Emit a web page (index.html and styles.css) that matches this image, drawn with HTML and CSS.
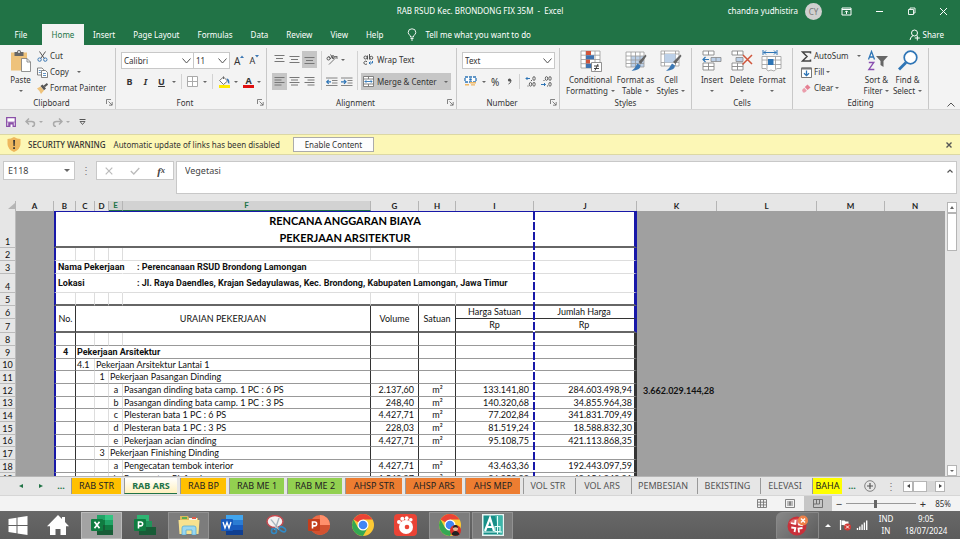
FILE: index.html
```html
<!DOCTYPE html>
<html lang="id">
<head>
<meta charset="utf-8">
<title>RAB RSUD Kec. BRONDONG FIX 35M - Excel</title>
<link rel="stylesheet" href="styles.css">
</head>
<body>
<header class="top">
  <div class="titlebar">
    <span></span>
    <h1>RAB RSUD Kec. BRONDONG FIX 35M&nbsp; -&nbsp; Excel</h1>
    <div class="account">
      <span>chandra yudhistira</span><span class="avatar">CY</span>
      <button aria-label="Ribbon display options"><svg width="11" height="9" viewBox="0 0 11 9"><path d="M1 1h9v7H1zM1 2.500h9M5.500 7V4M4 5.300l1.500-1.500L7 5.300" fill="none" stroke="#fff"/></svg></button>
      <button aria-label="Minimize"><svg width="9" height="9" viewBox="0 0 9 9"><path d="M1 4.500h7" stroke="#fff"/></svg></button>
      <button aria-label="Restore"><svg width="9" height="9" viewBox="0 0 9 9"><path d="M1.500 2.500h5v5h-5zM3 2.500V1h5v5H6.500" fill="none" stroke="#fff" stroke-width=".9"/></svg></button>
      <button aria-label="Close"><svg width="9" height="9" viewBox="0 0 9 9"><path d="M1 1l7 7M8 1L1 8" stroke="#fff"/></svg></button>
    </div>
  </div>
  <nav class="tabs">
    <button class="file">File</button><button class="active">Home</button><button>Insert</button><button>Page Layout</button><button>Formulas</button><button>Data</button><button>Review</button><button>View</button><button>Help</button>
    <button class="tell"><svg width="10" height="13" viewBox="0 0 10 13"><path d="M3.500 9V7.800Q1.200 6.500 1.200 4.400A3.800 3.600 0 0 1 8.800 4.400Q8.800 6.500 6.500 7.800V9zM3.500 10.500h3M4 12h2" fill="none" stroke="#fff" stroke-width=".9"/></svg>Tell me what you want to do</button>
    <button class="share"><svg width="11" height="12" viewBox="0 0 11 12"><circle cx="5.500" cy="4" r="3" fill="none" stroke="#fff"/><path d="M1 11q.5-3.500 3-4.300M8.300 6.500v5M5.800 9h5" fill="none" stroke="#fff"/></svg>Share</button>
  </nav>
</header>

<section class="ribbon" aria-label="Home ribbon">
  <div class="group clipboard">
    <div class="body">
      <button class="big"><svg width="22" height="22" viewBox="0 0 22 22"><rect x="1" y="2.500" width="16" height="18" fill="#eec27b"/><path d="M4.500 2h2.500a2 2 0 0 1 4 0h2.500v4h-9z" fill="#666"/><circle cx="9" cy="2" r=".9" fill="#fff"/><path d="M11.500 8.500h5.500l3.500 3.500v9.500h-9z" fill="#fff" stroke="#777" stroke-width=".8"/><path d="M17 8.500v3.500h3.500" fill="none" stroke="#777" stroke-width=".8"/></svg><span>Paste</span><i class="dn"></i></button>
      <div class="list">
        <button><svg width="11" height="11" viewBox="0 0 11 11"><path d="M2.500.5l4.800 7M8.500.5L3.700 7.500" stroke="#555" fill="none"/><circle cx="2.600" cy="8.600" r="1.700" fill="none" stroke="#3c78b4"/><circle cx="8.300" cy="8.600" r="1.700" fill="none" stroke="#3c78b4"/></svg>Cut</button>
        <button><svg width="11" height="11" viewBox="0 0 11 11"><path d="M.5 1h4.500l1.500 1.500V8h-6z" fill="#fff" stroke="#666" stroke-width=".8"/><path d="M4.500 3.500H8.500l2 2v5h-6z" fill="#fff" stroke="#666" stroke-width=".8"/><path d="M1.800 3.500h2M1.800 5.500h2M6 6.500h3M6 8.500h3" stroke="#3c78b4" stroke-width=".8"/></svg>Copy<i class="dn gap"></i></button>
        <button><svg width="11" height="11" viewBox="0 0 11 11"><path d="M0 5.500l3.500-2 3.500 4-3 3.500q-1-3-4-5.500z" fill="#eec27b"/><path d="M3.500 3l2-1.500 3.500 4-2 1.800z" fill="#555"/><path d="M7.200 3.600L10.500.8" stroke="#555" stroke-width="2"/></svg>Format Painter</button>
      </div>
    </div>
    <div class="label"><span>Clipboard</span><svg class="launch" viewBox="0 0 7 7"><path d="M.5 5V.5H5M2.500 2.500l3.500 3.500M6.200 3v3.200H3" fill="none" stroke="#666" stroke-width=".8"/></svg></div>
  </div>

  <div class="group font">
    <div class="body rows">
      <div class="row">
        <span class="combo name"><select aria-label="Font"><option>Calibri</option></select><svg width="9" height="6" viewBox="0 0 9 6"><path d="M.5.500l4 4.500 4-4.500" fill="none" stroke="#555"/></svg></span><span class="combo size"><select aria-label="Font size"><option>11</option></select><svg width="9" height="6" viewBox="0 0 9 6"><path d="M.5.500l4 4.500 4-4.500" fill="none" stroke="#555"/></svg></span>
        <button class="grow" aria-label="Increase font size">A<svg width="4" height="3" viewBox="0 0 4 3"><path d="M0 3l2-2.500L4 3z" fill="#3c78b4"/></svg></button>
        <button class="grow less" aria-label="Decrease font size">A<svg width="4" height="3" viewBox="0 0 4 3"><path d="M0 0l2 2.500L4 0z" fill="#3c78b4"/></svg></button>
      </div>
      <div class="row tools">
        <button class="b">B</button><button class="it">I</button><button class="u">U</button><i class="dn"></i><i class="rule"></i>
        <button aria-label="Borders"><svg width="11" height="11" viewBox="0 0 11 11"><path d="M.5.500h10v10H.500zM5.500.500v10M.5 5.500h10" fill="#fff" stroke="#aaa"/></svg></button><i class="dn"></i><i class="rule"></i>
        <button aria-label="Fill color"><svg width="13" height="12" viewBox="0 0 13 12"><path d="M1.500 4.500L5.500 1l4 4-4 3.500z" fill="#fff" stroke="#666" stroke-width=".9"/><path d="M5.500 3V.500" stroke="#666"/><path d="M8.500 2.500q3.500 0 2.800 5.500-1.600-.4-1.800-3z" fill="#3c78b4"/><path d="M1 9h11v3H1z" fill="#ffeb00"/></svg></button><i class="dn"></i>
        <button aria-label="Font color" class="fc">A</button><i class="dn"></i>
      </div>
    </div>
    <div class="label"><span>Font</span><svg class="launch" viewBox="0 0 7 7"><path d="M.5 5V.5H5M2.500 2.500l3.500 3.500M6.200 3v3.200H3" fill="none" stroke="#666" stroke-width=".8"/></svg></div>
  </div>

  <div class="group align">
    <div class="body cols">
      <div class="aligns">
        <button aria-label="Top align"><svg width="11" height="9" viewBox="0 0 11 9"><path d="M.5.500h10M2 3.500h7M.5 6.500h10" stroke="#777"/></svg></button>
        <button aria-label="Middle align"><svg width="11" height="9" viewBox="0 0 11 9"><path d="M.5 1.500h10M2 4.500h7M.5 7.500h10" stroke="#777"/></svg></button>
        <button class="on" aria-label="Bottom align"><svg width="11" height="9" viewBox="0 0 11 9"><path d="M.5 2.500h10M2 5.500h7M.5 8.500h10" stroke="#777"/></svg></button>
        <button class="on" aria-label="Align left"><svg width="11" height="9" viewBox="0 0 11 9"><path d="M.5.500h10M.5 3h7M.5 5.500h10M.5 8h7" stroke="#777"/></svg></button>
        <button aria-label="Center"><svg width="11" height="9" viewBox="0 0 11 9"><path d="M.5.500h10M2 3h7M.5 5.500h10M2 8h7" stroke="#777"/></svg></button>
        <button aria-label="Align right"><svg width="11" height="9" viewBox="0 0 11 9"><path d="M.5.500h10M3.500 3h7M.5 5.500h10M3.500 8h7" stroke="#777"/></svg></button>
      </div>
      <div class="indent">
        <div><button aria-label="Orientation"><svg width="12" height="11" viewBox="0 0 12 11"><path d="M3 10.500l8-8M11 5V2.500H8.500" fill="none" stroke="#666" stroke-width=".9"/><circle cx="2.500" cy="4.500" r="1.500" fill="none" stroke="#555"/><path d="M2.500 2l2.500 3M4.500.500l3 4.500" stroke="#555"/><circle cx="7" cy="3" r="1.300" fill="none" stroke="#555"/></svg></button><i class="dn"></i></div>
        <div><button aria-label="Decrease indent"><svg width="12" height="10" viewBox="0 0 12 10"><path d="M0 1h11.500M6 3.500h5.500M6 6h5.500M0 8.500h11.500" stroke="#777" stroke-width=".9"/><path d="M5 4.800H.8M2.700 2.800l-2 2 2 2" fill="none" stroke="#2e75b6" stroke-width="1.200"/></svg></button><button aria-label="Increase indent"><svg width="12" height="10" viewBox="0 0 12 10"><path d="M0 1h11.500M6.500 3.500h5M6.500 6h5M0 8.500h11.500" stroke="#777" stroke-width=".9"/><path d="M0 4.800h5M3 2.800l2 2-2 2" fill="none" stroke="#2e75b6" stroke-width="1.200"/></svg></button></div>
      </div>
      <div class="wrap">
        <button><svg width="11" height="11" viewBox="0 0 11 11"><circle cx="2.500" cy="3.500" r="1.500" fill="none" stroke="#555"/><path d="M4.500 1.500V5.500M6.500 0v5.500M4 7.700a1.800 1.600 0 1 0 0 2.200" fill="none" stroke="#555"/><circle cx="8.300" cy="3.800" r="1.500" fill="none" stroke="#555"/><path d="M9.500 7v2H6M7.500 7.500L6 9l1.500 1.500" fill="none" stroke="#2e75b6"/></svg>Wrap Text</button>
        <button class="on"><svg width="11" height="11" viewBox="0 0 11 11"><path d="M.5.500h10v10H.500zM.5 3h10M.5 8h10M5.500.500V3M5.500 8v2.500" fill="#fff" stroke="#777" stroke-width=".9"/><path d="M1.800 5.500h7.400M3.300 4.200L2 5.500l1.300 1.300M7.700 4.200L9 5.500 7.700 6.800" fill="none" stroke="#2e75b6" stroke-width=".9"/></svg>Merge &amp; Center<i class="dn"></i></button>
      </div>
    </div>
    <div class="label"><span>Alignment</span><svg class="launch" viewBox="0 0 7 7"><path d="M.5 5V.5H5M2.500 2.500l3.500 3.500M6.200 3v3.200H3" fill="none" stroke="#666" stroke-width=".8"/></svg></div>
  </div>

  <div class="group number">
    <div class="body rows">
      <div class="row"><span class="combo format"><select aria-label="Number format"><option>Text</option></select><svg width="9" height="6" viewBox="0 0 9 6"><path d="M.5.500l4 4.500 4-4.500" fill="none" stroke="#555"/></svg></span></div>
      <div class="row tools">
        <button aria-label="Accounting format"><svg width="13" height="11" viewBox="0 0 13 11"><path d="M1 1h11v5H1z" fill="#fff" stroke="#2e75b6" stroke-width="1.300" stroke-dasharray="3 1"/><circle cx="6.500" cy="3.500" r="1.300" fill="#2e75b6"/><path d="M6 6h6v1.500H6zM7 8.200h4v1.200H7zM1 8h4v1.500H1z" fill="#eeb765"/></svg></button><i class="dn"></i>
        <button class="pct">%</button><button class="comma" aria-label="Comma style"><svg width="5" height="9" viewBox="0 0 5 9"><circle cx="2.500" cy="3" r="1.600" fill="#555"/><path d="M4 3q.4 3-2.500 4" fill="none" stroke="#555"/></svg></button><i class="rule"></i>
        <button class="dec" aria-label="Increase decimal"><svg width="11" height="11" viewBox="0 0 11 11"><path d="M5 2.500H1M2.500 1L1 2.500 2.500 4" fill="none" stroke="#2e75b6"/><g fill="none" stroke="#555" stroke-width=".9"><ellipse cx="9" cy="2.500" rx="1.200" ry="1.900"/><ellipse cx="5.500" cy="8.300" rx="1.200" ry="1.900"/><ellipse cx="9" cy="8.300" rx="1.200" ry="1.900"/></g><path d="M6 4h1v1H6zM2.500 9.500h1v1h-1z" fill="#555"/></svg></button>
        <button class="dec" aria-label="Decrease decimal"><svg width="11" height="11" viewBox="0 0 11 11"><path d="M0 8.500h4.500M3 7l1.500 1.500L3 10" fill="none" stroke="#2e75b6"/><g fill="none" stroke="#555" stroke-width=".9"><ellipse cx="5.500" cy="2.500" rx="1.200" ry="1.900"/><ellipse cx="9" cy="2.500" rx="1.200" ry="1.900"/><ellipse cx="9" cy="8.300" rx="1.200" ry="1.900"/></g><path d="M2.500 4h1v1h-1zM6 9.500h1v1H6z" fill="#555"/></svg></button>
      </div>
    </div>
    <div class="label"><span>Number</span><svg class="launch" viewBox="0 0 7 7"><path d="M.5 5V.5H5M2.500 2.500l3.500 3.500M6.200 3v3.200H3" fill="none" stroke="#666" stroke-width=".8"/></svg></div>
  </div>

  <div class="group styles">
    <div class="body bigs">
      <button class="big"><svg width="22" height="22" viewBox="0 0 22 22"><path d="M1 1h19v17H1zM1 5.200h19M1 9.500h19M1 13.700h19M6 1v17M15 1v17" fill="#fff" stroke="#999" stroke-width=".8"/><path d="M6 1h5v4H6zM6 9.500h4v4H6z" fill="#d0553b"/><path d="M6 5.200h8v4H6zM6 13.700h6V18H6z" fill="#3f72af"/><path d="M11.500 12.500h10v9h-10z" fill="#fff" stroke="#777" stroke-width=".8"/><path d="M14 16h5M14 18.500h5M18 14l-3 6.500" stroke="#333" stroke-width=".9"/></svg><span>Conditional<br>Formatting<i class="dn"></i></span></button>
      <button class="big"><svg width="22" height="22" viewBox="0 0 22 22"><path d="M1 2h18v15H1z" fill="#fff"/><path d="M6 6h13v11H6z" fill="#bcd0e8"/><path d="M1 2h18v15H1zM1 6h18M1 10h18M1 13.500h18M6 2v15M10.500 2v15M15 2v15" fill="none" stroke="#999" stroke-width=".8"/><path d="M20.500 4.500l1 1.500-5.500 8-2.500-2z" fill="#666"/><path d="M12.500 13.500l3 2q0 4.500-9 5.500 3.500-2.500 6-7.500z" fill="#3c78b4"/></svg><span>Format as<br>Table<i class="dn"></i></span></button>
      <button class="big narrow"><svg width="22" height="22" viewBox="0 0 22 22"><path d="M1 1h18v15H1zM1 4h18M1 12.500h18M4.500 1v15M15.500 1v15" fill="#fff" stroke="#999" stroke-width=".8"/><path d="M4.500 4h11v8.500h-11z" fill="#bcd0e8"/><path d="M20.500 4.500l1 1.500-6 8-2.500-2z" fill="#666"/><path d="M12 13.500l3 2q0 4.500-9 5.500 3.500-2.500 6-7.500z" fill="#3c78b4"/></svg><span>Cell<br>Styles<i class="dn"></i></span></button>
    </div>
    <div class="label"><span>Styles</span></div>
  </div>

  <div class="group cells">
    <div class="body bigs">
      <button class="big"><svg width="22" height="22" viewBox="0 0 22 22"><path d="M2 1h11v4H2zM7.500 1v4M2 13h11v7H2zM7.500 13v7M2 16.500h11" fill="#fff" stroke="#888" stroke-width=".9"/><path d="M10 7.500h10v4H10zM15 7.500v4" fill="#bcd0e8" stroke="#888" stroke-width=".8"/><path d="M8 9.500H2M4.500 7L2 9.500 4.500 12" fill="none" stroke="#2e75b6" stroke-width="1.200"/></svg><span>Insert</span><i class="dn"></i></button>
      <button class="big"><svg width="22" height="22" viewBox="0 0 22 22"><path d="M1 1h11v4H1zM6.500 1v4M1 13h11v7H1zM6.500 13v7M1 16.500h11" fill="#fff" stroke="#888" stroke-width=".9"/><path d="M5 7.500h7v4H5z" fill="#bcd0e8" stroke="#888" stroke-width=".8"/><path d="M12 5l9 9M21 5l-9.500 9.500" stroke="#d0553b" stroke-width="1.500"/></svg><span>Delete</span><i class="dn"></i></button>
      <button class="big"><svg width="22" height="22" viewBox="0 0 22 22"><path d="M2.500 2.500h13M2 0v5M16 0v5M5 .5l-2 2 2 2M13 .5l2 2-2 2" fill="none" stroke="#2e75b6"/><path d="M1 6.500h19v12h-4l-3 2.500-3-1-3 1-2-2.500H1zM1 10h19M1 14.500h19M6 6.500V19M14.500 6.500V19" fill="#fff" stroke="#999" stroke-width=".8"/><path d="M7 9h5.500v6H7z" fill="#2e75b6"/></svg><span>Format</span><i class="dn"></i></button>
    </div>
    <div class="label"><span>Cells</span></div>
  </div>

  <div class="group editing">
    <div class="body">
      <div class="list">
        <button><svg width="11" height="11" viewBox="0 0 11 11"><path d="M9.500 2.500V1H1.500l4.500 4.500L1.500 10h8V8.500" fill="none" stroke="#444" stroke-width="1.500"/></svg>AutoSum<i class="dn gap"></i></button>
        <button><svg width="11" height="11" viewBox="0 0 11 11"><path d="M.5 1h10v9.500H.500z" fill="#fff" stroke="#777"/><path d="M.5.500h10v2H.500z" fill="#777"/><path d="M5.500 3.500v5M3 6.200l2.500 2.500L8 6.200" fill="none" stroke="#2e75b6" stroke-width="1.300"/></svg>Fill<i class="dn"></i></button>
        <button><svg width="11" height="11" viewBox="0 0 11 11"><path d="M6.500 1.500l3 3-3 2.500-2.700-3z" fill="#e57f92"/><path d="M3.200 4.800l2.700 3L3.800 9.500H2L1 7z" fill="#ea9dab"/></svg>Clear<i class="dn"></i></button>
      </div>
      <button class="big"><svg width="22" height="22" viewBox="0 0 22 22"><path d="M2.500 9.500L5.500 1.500l3 8M3.700 7h3.700" fill="none" stroke="#2e75b6" stroke-width="1.300"/><path d="M2.800 12.500h5l-5 7h5.500" fill="none" stroke="#8a4fb0" stroke-width="1.300"/><path d="M10 6h12l-4.500 5v6l-3-2v-4z" fill="#666"/></svg><span>Sort &amp;<br>Filter<i class="dn"></i></span></button>
      <button class="big"><svg width="22" height="22" viewBox="0 0 22 22"><circle cx="13.500" cy="7.500" r="6.300" fill="#fff" stroke="#2e75b6" stroke-width="1.700"/><path d="M9 12.500L2 19.500" stroke="#2e75b6" stroke-width="2.800"/></svg><span>Find &amp;<br>Select<i class="dn"></i></span></button>
    </div>
    <div class="label"><span>Editing</span></div>
  </div>
  <button class="collapse" aria-label="Collapse ribbon"><svg width="8" height="5" viewBox="0 0 8 5"><path d="M.5 4.500L4 1l3.500 3.500" fill="none" stroke="#555"/></svg></button>
</section>

<div class="quick">
  <button aria-label="Save"><svg width="10" height="10" viewBox="0 0 10 10"><path d="M.7.700h8.600v8.600H.700z" fill="#fff" stroke="#8a4fa8" stroke-width="1.300"/><path d="M0 5h10M2.500 5.500h5V10h-5z" fill="#8a4fa8" stroke="#8a4fa8" stroke-width=".6"/><path d="M4.500 7.500h2V10h-2z" fill="#fff"/></svg></button>
  <button aria-label="Undo"><svg width="11" height="9" viewBox="0 0 11 9"><path d="M4 .5L1 3.500l3 3M1 3.500h5.500q3 0 3 2.500T7 8.500" fill="none" stroke="#aaa" stroke-width="1.500"/></svg><i class="dn pale"></i></button>
  <button aria-label="Redo"><svg width="11" height="9" viewBox="0 0 11 9"><path d="M7 .5l3 3-3 3M10 3.500H4.500q-3 0-3 2.500T4 8.500" fill="none" stroke="#aaa" stroke-width="1.500"/></svg><i class="dn pale"></i></button>
  <button aria-label="Customize"><svg width="7" height="6" viewBox="0 0 7 6"><path d="M.5.500h6" stroke="#555"/><path d="M1 2.500h5l-2.500 3z" fill="none" stroke="#555" stroke-width=".9"/></svg></button>
</div>

<div class="warning" role="alert">
  <svg width="14" height="15" viewBox="0 0 14 15"><path d="M7 0q3 2 6.500 2v5q0 5-6.500 8Q.5 12 .5 7V2Q4 2 7 0z" fill="#eeb75e"/><path d="M6.200 3h1.800l-.3 6H6.500zM6.200 10.200h1.700V12H6.200z" fill="#333"/></svg>
  <b>SECURITY WARNING</b><span>Automatic update of links has been disabled</span><button class="enable">Enable Content</button>
  <button class="dismiss" aria-label="Dismiss"><svg width="6" height="6" viewBox="0 0 6 6"><path d="M.5.500l5 5M5.500.500l-5 5" stroke="#555" stroke-width="1.400"/></svg></button>
</div>

<div class="formula">
  <div class="namebox"><input aria-label="Name box" value="E118"><i class="dn"></i></div>
  <span class="dots">⋮</span>
  <div class="fx">
    <button aria-label="Cancel"><svg width="8" height="8" viewBox="0 0 8 8"><path d="M.7.700l6.600 6.600M7.300.700L.7 7.300" stroke="#bbb" stroke-width="1.200"/></svg></button>
    <button aria-label="Enter"><svg width="10" height="8" viewBox="0 0 10 8"><path d="M.8 4l3 3L9.300 1" fill="none" stroke="#bbb" stroke-width="1.300"/></svg></button>
    <button class="fn" aria-label="Insert function">f<small>x</small></button>
  </div>
  <div class="entry"><textarea aria-label="Formula">Vegetasi</textarea><svg width="6" height="4" viewBox="0 0 6 4"><path d="M.5 3.500L3 1l2.500 2.500" fill="none" stroke="#555" stroke-width="1.200"/></svg></div>
</div>

<main class="work">
  <div class="sheet">
  <table>
    <colgroup><col class="w16"><col class="w38"><col class="w22"><col class="w19"><col class="w14"><col class="w14"><col class="w248"><col class="w48"><col class="w37"><col class="w78"><col class="w103"><col class="w80"><col class="w100"><col class="w68"><col></colgroup>
    <thead><tr><th class="corner"><svg width="7" height="6" viewBox="0 0 7 6"><path d="M7 0v6H0z" fill="#b5b5b5"/></svg></th><th>A</th><th>B</th><th>C</th><th>D</th><th class="sel">E</th><th class="sel">F</th><th>G</th><th>H</th><th>I</th><th>J</th><th>K</th><th>L</th><th>M</th><th>N</th></tr></thead>
    <tbody class="intro">
      <tr class="r1"><th>1</th><td class="out"></td><td class="title first last thick" colspan="9">RENCANA ANGGARAN BIAYA<br>PEKERJAAN ARSITEKTUR<span class="pagebreak"></span></td><td class="out" colspan="4"></td></tr>
      <tr><th>2</th><td class="out"></td><td class="first"></td><td></td><td></td><td></td><td></td><td></td><td></td><td></td><td class="last"></td><td class="out" colspan="4"></td></tr>
      <tr class="info"><th>3</th><td class="out"></td><td class="first open" colspan="4"><span>Nama Pekerjaan</span></td><td class="over"><span>: Perencanaan RSUD Brondong Lamongan</span></td><td></td><td></td><td></td><td class="last"></td><td class="out" colspan="4"></td></tr>
      <tr class="info tall"><th>4</th><td class="out"></td><td class="first open" colspan="4"><span>Lokasi</span></td><td class="over open" colspan="4"><span>: Jl. Raya Daendles, Krajan Sedayulawas, Kec. Brondong, Kabupaten Lamongan, Jawa Timur</span></td><td class="last"></td><td class="out" colspan="4"></td></tr>
      <tr><th>5</th><td class="out"></td><td class="first thick"></td><td class="thick"></td><td class="thick"></td><td class="thick"></td><td class="thick"></td><td class="thick"></td><td class="thick"></td><td class="thick"></td><td class="last thick"></td><td class="out" colspan="4"></td></tr>
    </tbody>
    <tbody class="heads">
      <tr><th>6</th><td class="out"></td><td class="first thick" rowspan="2">No.</td><td class="thick" colspan="4" rowspan="2">URAIAN PEKERJAAN</td><td class="thick" rowspan="2">Volume</td><td class="thick" rowspan="2">Satuan</td><td>Harga Satuan</td><td class="last">Jumlah Harga</td><td class="out" colspan="4"></td></tr>
      <tr class="r7"><th>7</th><td class="out"></td><td class="thick">Rp</td><td class="last thick">Rp</td><td class="out" colspan="4"></td></tr>
    </tbody>
    <tbody class="data">
      <tr><th>8</th><td class="out"></td><td class="first"></td><td></td><td></td><td></td><td></td><td></td><td></td><td></td><td class="last"></td><td class="out" colspan="4"></td></tr>
      <tr class="section"><th>9</th><td class="out"></td><td class="first">4</td><td colspan="4">Pekerjaan Arsitektur</td><td></td><td></td><td></td><td class="last"></td><td class="out" colspan="4"></td></tr>
      <tr><th>10</th><td class="out"></td><td class="first"></td><td>4.1</td><td class="merge" colspan="3">Pekerjaan Arsitektur Lantai 1</td><td></td><td></td><td></td><td class="last"></td><td class="out" colspan="4"></td></tr>
      <tr class="sub"><th>11</th><td class="out"></td><td class="first"></td><td></td><td>1</td><td class="merge" colspan="2">Pekerjaan Pasangan Dinding</td><td></td><td></td><td></td><td class="last"></td><td class="out" colspan="4"></td></tr>
      <tr class="item"><th>12</th><td class="out"></td><td class="first"></td><td></td><td></td><td>a</td><td>Pasangan dinding bata camp. 1 PC : 6 PS</td><td>2.137,60</td><td>m²</td><td>133.141,80</td><td class="last">284.603.498,94</td><td class="out total" colspan="4">3.662.029.144,28</td></tr>
      <tr class="item"><th>13</th><td class="out"></td><td class="first"></td><td></td><td></td><td>b</td><td>Pasangan dinding bata camp. 1 PC : 3 PS</td><td>248,40</td><td>m²</td><td>140.320,68</td><td class="last">34.855.964,38</td><td class="out" colspan="4"></td></tr>
      <tr class="item"><th>14</th><td class="out"></td><td class="first"></td><td></td><td></td><td>c</td><td>Plesteran bata 1 PC : 6 PS</td><td>4.427,71</td><td>m²</td><td>77.202,84</td><td class="last">341.831.709,49</td><td class="out" colspan="4"></td></tr>
      <tr class="item"><th>15</th><td class="out"></td><td class="first"></td><td></td><td></td><td>d</td><td>Plesteran bata 1 PC : 3 PS</td><td>228,03</td><td>m²</td><td>81.519,24</td><td class="last">18.588.832,30</td><td class="out" colspan="4"></td></tr>
      <tr class="item"><th>16</th><td class="out"></td><td class="first"></td><td></td><td></td><td>e</td><td>Pekerjaan acian dinding</td><td>4.427,71</td><td>m²</td><td>95.108,75</td><td class="last">421.113.868,35</td><td class="out" colspan="4"></td></tr>
      <tr class="sub"><th>17</th><td class="out"></td><td class="first"></td><td></td><td>3</td><td class="merge" colspan="2">Pekerjaan Finishing Dinding</td><td></td><td></td><td></td><td class="last"></td><td class="out" colspan="4"></td></tr>
      <tr class="item"><th>18</th><td class="out"></td><td class="first"></td><td></td><td></td><td>a</td><td>Pengecatan tembok interior</td><td>4.427,71</td><td>m²</td><td>43.463,36</td><td class="last">192.443.097,59</td><td class="out" colspan="4"></td></tr>
      <tr class="item"><th>19</th><td class="out"></td><td class="first"></td><td></td><td></td><td>b</td><td>Pengecatan Plafond</td><td>1.549,97</td><td>m²</td><td>36.859,88</td><td class="last">49.156.849,81</td><td class="out" colspan="4"></td></tr>
    </tbody>
  </table>
  </div>
  <div class="vscroll"><button aria-label="Scroll up"><i class="dn up"></i></button><span class="thumb"></span><button aria-label="Scroll down"><i class="dn"></i></button></div>
</main>

<div class="sheets">
  <button class="arrow" aria-label="Previous sheet"><i class="side left"></i></button><button class="arrow" aria-label="Next sheet"><i class="side"></i></button><button class="more">...</button>
  <div class="strip">
    <button class="gold s1">RAB STR</button><button class="current s2">RAB ARS</button><button class="gold s3">RAB BP</button><button class="green s4">RAB ME 1</button><button class="green s4">RAB ME 2</button><button class="orange s5">AHSP STR</button><button class="orange s5">AHSP ARS</button><button class="orange s4">AHS MEP</button><button class="s10">VOL STR</button><button class="s2">VOL ARS</button><button class="s6">PEMBESIAN</button><button class="s7">BEKISTING</button><button class="s8">ELEVASI</button><button class="yellow s9">BAHA</button>
  </div>
  <button class="more">...</button>
  <button class="add" aria-label="New sheet"><svg width="12" height="12" viewBox="0 0 12 12"><circle cx="6" cy="6" r="5.300" fill="none" stroke="#777" stroke-width=".9"/><path d="M3 6h6M6 3v6" stroke="#555" stroke-width="1.200"/></svg></button>
  <span class="dots">⋮</span>
  <div class="hscroll"><button aria-label="Scroll left"><i class="side left"></i></button><span></span><button aria-label="Scroll right"><i class="side"></i></button></div>
</div>

<div class="status">
  <button aria-label="Normal view"><svg width="10" height="9" viewBox="0 0 10 9"><path d="M.5.500h9v8h-9zM.5 3.200h9M.5 5.900h9M3.500.500v8M6.500.500v8" fill="none" stroke="#777" stroke-width=".9"/></svg></button>
  <button aria-label="Page layout view"><svg width="10" height="9" viewBox="0 0 10 9"><path d="M.5.500h9v8h-9zM3 2v5M7 2v5M4.500 2.500h1v4h-1z" fill="none" stroke="#777" stroke-width=".9"/></svg></button>
  <button class="on" aria-label="Page break preview"><svg width="10" height="9" viewBox="0 0 10 9"><path d="M.5.500h9v8h-9zM3.500.500V5H.500M6.500.500V5h-3" fill="none" stroke="#666" stroke-width=".9"/></svg></button>
  <button class="z">−</button><input type="range" aria-label="Zoom" min="10" max="190" value="85"><button class="z">+</button><span class="pc">85%</span>
</div>

<footer class="taskbar">
  <button aria-label="Start"><svg width="20" height="19" viewBox="0 0 20 19"><path d="M.5 3L8.500 1.800V9H.500zM9.500 1.600L19.500 0v9h-10zM.5 10h8v7.200L.5 16zM9.500 10h10v9l-10-1.600z" fill="#fff"/></svg></button>
  <button aria-label="Home"><svg width="22" height="20" viewBox="0 0 22 20"><path d="M11 0l4 4V2h3v5l4 4.200h-3V20h-5.500v-6h-5v6H3v-8.800H0z" fill="#fff"/></svg></button>
  <button class="open focus" aria-label="Excel"><svg width="22" height="20" viewBox="0 0 22 20"><path d="M6 0h8v5H6z" fill="#21a366"/><path d="M14 0h8v5h-8z" fill="#33c481"/><path d="M6 5h8v5H6z" fill="#107c41"/><path d="M14 5h8v5h-8z" fill="#21a366"/><path d="M6 10h16v10H6z" fill="#185c37"/><path d="M14 10h8v5h-8z" fill="#107c41"/><rect y="4" width="12" height="12" rx="1" fill="#107c41"/><path d="M3.500 6.800l5 6.400M8.500 6.800l-5 6.400" stroke="#fff" stroke-width="1.700"/></svg></button>
  <button aria-label="Project"><svg width="22" height="20" viewBox="0 0 22 20"><path d="M3 0h12v6H3z" fill="#2fb573"/><path d="M3 6h15v6H3z" fill="#21935a"/><path d="M5 12h17v8H5z" fill="#185c37"/><rect y="4" width="12" height="12" rx="1" fill="#107c41"/><path d="M4.500 13.500V7h2.200a1.900 1.900 0 0 1 0 3.900H4.500" fill="none" stroke="#fff" stroke-width="1.600"/></svg></button>
  <button class="open" aria-label="Explorer"><svg width="24" height="20" viewBox="0 0 24 20"><path d="M3 1h8l1 2h9v15H3z" fill="#dcb95c"/><path d="M5 2h5v2H5z" fill="#5cab4e"/><path d="M12 3h8v2h-8z" fill="#f6f2e5"/><path d="M15 2h4v2h-4z" fill="#df5a49"/><path d="M1.500 5h21l-1 14h-19z" fill="#f7e28f"/><path d="M5 20v-7q0-2 2-2h10q2 0 2 2v7h-4v-5H9v5z" fill="#9bd7f0" stroke="#57acd2" stroke-width=".8"/></svg></button>
  <button aria-label="Word"><svg width="22" height="20" viewBox="0 0 22 20"><path d="M5 0h17v5H5z" fill="#41a5ee"/><path d="M5 5h17v5H5z" fill="#2b7cd3"/><path d="M5 10h17v5H5z" fill="#185abd"/><path d="M5 15h17v5H5z" fill="#103f91"/><rect y="4" width="12" height="12" rx="1" fill="#185abd"/><path d="M2 7l2 6 2-5.500L8 13l2-6" fill="none" stroke="#fff" stroke-width="1.300"/></svg></button>
  <button aria-label="Snipping Tool"><svg width="22" height="20" viewBox="0 0 22 20"><ellipse cx="10" cy="6.500" rx="8" ry="6" fill="#f5f1f1" stroke="#c54a50" stroke-width="1.500"/><path d="M6 4.500l8 10M14 3l-4 12" stroke="#c9d2d8" stroke-width="1.700"/><path d="M6 4.500l8 10M14 3l-4 12" stroke="#8998a4" stroke-width=".6"/><circle cx="9" cy="16" r="2.500" fill="none" stroke="#3289c4" stroke-width="1.600"/><ellipse cx="17.500" cy="14" rx="3.500" ry="2" transform="rotate(30 17 14)" fill="none" stroke="#3289c4" stroke-width="1.500"/></svg></button>
  <button aria-label="PowerPoint"><svg width="22" height="20" viewBox="0 0 22 20"><circle cx="12" cy="10" r="10" fill="#ed6c47"/><path d="M12 0a10 10 0 0 1 10 10H12z" fill="#ff8f6b"/><path d="M2 10h20a10 10 0 0 1-20 0z" fill="#d35230"/><rect y="4" width="12" height="12" rx="1" fill="#c43e1c"/><path d="M4.500 13.500V7h2.200a1.900 1.900 0 0 1 0 3.900H4.500" fill="none" stroke="#fff" stroke-width="1.600"/></svg></button>
  <button aria-label="Chrome"><svg width="22" height="22" viewBox="0 0 22 22"><circle cx="11" cy="11" r="11" fill="#fcc934"/><path d="M11 11L1.500 5.500A11 11 0 0 1 20.500 5.500H11z" fill="#ea4335"/><path d="M1.500 5.500A11 11 0 0 0 11 22l4.800-8.200-9.600.2z" fill="#34a853"/><circle cx="11" cy="11" r="5.500" fill="#fff"/><circle cx="11" cy="11" r="4.300" fill="#4285f4"/></svg></button>
  <button aria-label="GOM"><svg width="23" height="22" viewBox="0 0 23 22"><rect width="23" height="22" rx="4" fill="#ea4335"/><circle cx="12" cy="13" r="7" fill="#fff"/><circle cx="5" cy="8" r="2" fill="#fff"/><circle cx="8.300" cy="4.800" r="2" fill="#fff"/><circle cx="12.700" cy="4.200" r="1.900" fill="#fff"/><circle cx="16.800" cy="5.800" r="1.800" fill="#fff"/><circle cx="13" cy="13" r="2.300" fill="#ea4335"/></svg></button>
  <button class="open" aria-label="Chrome profile"><svg width="22" height="22" viewBox="0 0 22 22"><circle cx="11" cy="11" r="11" fill="#fcc934"/><path d="M11 11L1.500 5.500A11 11 0 0 1 20.500 5.500H11z" fill="#ea4335"/><path d="M1.500 5.500A11 11 0 0 0 11 22l4.800-8.200-9.600.2z" fill="#34a853"/><circle cx="11" cy="11" r="5.500" fill="#fff"/><circle cx="11" cy="11" r="4.300" fill="#4285f4"/><circle cx="16.500" cy="16.500" r="5.500" fill="#d92f28"/><circle cx="16.500" cy="14.500" r="2.500" fill="#e5b794"/><path d="M14 14q0-3 2.500-3t2.500 3q-2.500-1.500-5 0zM12.500 20.500q1-3.500 4-3.500t4 3.500q-4 2.500-8 0z" fill="#222"/></svg></button>
  <button class="open" aria-label="AutoCAD"><svg width="22" height="22" viewBox="0 0 22 22"><rect width="22" height="22" fill="#e9f5f3"/><path d="M1.500 1.500h19v19h-19z" fill="#178f88"/><path d="M13 1.500h7.500v19H18z" fill="#3db6a9"/><path d="M3 17L8 4l4 13M4.500 13h7" fill="none" stroke="#fff" stroke-width="2.200"/><path d="M1 18h19M15.500 2v18M13 12.500h5v5h-5z" fill="none" stroke="#e4fff9" stroke-width="1.100"/></svg></button>
  <div class="tray">
    <button class="alert" aria-label="Security"><svg width="22" height="21" viewBox="0 0 22 21"><circle cx="10" cy="11" r="9.500" fill="#c9303a"/><path d="M2 8a9 8 0 0 1 16 0q-8 3-16 0z" fill="#e06c6e"/><path d="M8.500 5l-.5 4-4-1M13 6l-1 3.500 4 1M7.500 17l.8-4-4-.5M12 17.500l-.5-4 4-.5" fill="none" stroke="#fff" stroke-width="1.800"/><circle cx="16" cy="5.500" r="5" fill="#ee8148"/><path d="M14 3.500l4 4M18 3.500l-4 4" stroke="#fff" stroke-width="1.400"/></svg></button>
    <button aria-label="Show hidden icons"><i class="dn up white"></i></button>
    <button aria-label="Action center"><svg width="12" height="12" viewBox="0 0 12 12"><path d="M1.500 1v10" stroke="#fff" stroke-width="1.200"/><path d="M2.500 1.500h3l1 1h3V7H5.500l-1-1h-2z" fill="#fff"/><circle cx="8.500" cy="8" r="3.500" fill="#d33a35"/><path d="M7 6.500l3 3M10 6.500l-3 3" stroke="#fff"/></svg></button>
    <button aria-label="Network"><svg width="12" height="10" viewBox="0 0 12 10"><path d="M1.500 8v2M3.800 6.500V10M6.100 4.500V10M8.400 2.500V10M10.700.500V10" stroke="#fff" stroke-width="1.400"/></svg></button>
    <span class="lang">IND<br>IN</span><time>9:05<br>18/07/2024</time>
  </div>
</footer>
</body>
</html>
```
FILE: styles.css
```css
* { box-sizing: border-box; }
body {
  margin: 0;
  height: 100vh;
  display: flex;
  flex-direction: column;
  overflow: hidden;
  background: #e6e6e6;
  color: #333;
  font: 8px/12px "Noto Sans", "Open Sans", sans-serif;
}
button, input, select, textarea {
  margin: 0;
  padding: 0;
  border: 0;
  border-radius: 0;
  background: none;
  color: inherit;
  font: inherit;
  outline: 0;
}
button { display: flex; align-items: center; justify-content: center; white-space: nowrap; }
svg { display: block; flex: none; }

.dn { flex: none; display: inline-block; border: 2px solid transparent; border-top-color: #666; border-bottom: 0; }
.dn.up { border-top: 0; border-bottom: 3px solid #666; }
.dn.pale { border-top-color: #aaa; }
.dn.white { border-width: 0 3px 3px; border-bottom-color: #fff; }
.side { border: 3px solid transparent; border-left: 4px solid #444; border-right: 0; }
.side.left { border-right: 4px solid #444; border-left: 0; }
.rule { width: 1px; height: 15px; background: #d2d2d2; }

/* Title bar and ribbon tabs */
.top { flex: none; background: #217346; color: #fff; }
.titlebar { display: grid; grid-template-columns: 1fr auto 1fr; align-items: center; height: 22px; }
h1 { margin: 0; font-size: 8px; font-weight: 400; }
.account { display: flex; align-items: center; justify-content: flex-end; padding-right: 12px; }
.avatar { width: 17px; height: 17px; margin: 0 19px 0 7px; border-radius: 50%; background: #d0d0d0; color: #777; line-height: 17px; text-align: center; }
.account button { margin-left: 23px; }
.account .avatar + button { margin-left: 0; }
.tabs { display: flex; height: 23px; padding-top: 2px; }
.tabs button { padding: 0 9px; }
.tabs .file { width: 42px; }
.tabs .active { width: 42px; background: #f3f3f3; color: #217346; }
.tabs .tell { gap: 8px; margin-left: 6px; }
.tabs .share { gap: 3px; margin-left: auto; padding-right: 16px; }

/* Ribbon */
.ribbon { flex: none; display: flex; height: 65px; padding-top: 3px; background: #f3f3f3; border-bottom: 1px solid #d6d6d6; }
.group { display: flex; flex-direction: column; height: 61px; border-right: 1px solid #c8c8c8; }
.clipboard { width: 116px; }
.font { width: 151px; }
.align { width: 190px; }
.number { width: 103px; }
.styles { width: 132px; }
.cells { width: 101px; }
.editing { width: 136px; }
.body { display: flex; flex: 1; }
.label { display: flex; justify-content: center; height: 12px; position: relative; }
.clipboard .label, .font .label, .align .label, .number .label { padding-right: 12px; }
.launch { position: absolute; right: 2px; top: 2px; width: 7px; height: 7px; }
.big { flex-direction: column; justify-content: flex-start; line-height: 11px; padding-top: 2px; gap: 2px; }
.big .dn { margin: 3px 0 0; }
.big span .dn { margin: 0 0 2px 3px; }
.list { display: flex; flex-direction: column; }
.list button { height: 16px; gap: 2px; justify-content: flex-start; }
.list .gap { margin-left: 6px; }
.clipboard .big { width: 37px; padding-left: 4px; }
.rows { flex-direction: column; padding-left: 5px; }
.row { display: flex; align-items: center; height: 21px; }
.rows .row:first-child { height: 23px; padding-top: 2px; }
.combo { position: relative; height: 17px; border: 1px solid #c8c8c8; background: #fff; }
.combo + .combo { margin-left: -1px; }
.combo select { width: 100%; height: 15px; padding-left: 2px; appearance: none; }
.combo svg { position: absolute; right: 2px; top: 5px; pointer-events: none; }
.combo.name { width: 73px; }
.combo.size { width: 37px; }
.combo.format { width: 93px; }
.grow { align-items: flex-start; margin-left: 4px; font-size: 10px; }
.grow.less { margin-left: 5px; font-size: 9px; }
.tools { gap: 6px; }
.font .tools { padding-left: 3px; gap: 5px; }
.tools .b, .tools .it, .tools .u { width: 11px; font-size: 9px; font-weight: 700; }
.tools .it { font-style: italic; }
.tools .u { text-decoration: underline; }
.fc { width: 11px; height: 12px; border-bottom: 3px solid #e01010; font-size: 9px; font-weight: 700; line-height: 9px; }
.font .tools .rule ~ .rule ~ .dn { margin-left: -2px; }
.on { background: #c6c6c6; }
.cols { padding: 3px 5px 0; }
.aligns { display: grid; grid-template-columns: repeat(3, 15px); grid-template-rows: 17px 17px; row-gap: 5px; }
.indent { display: grid; grid-template-rows: 17px 17px; row-gap: 5px; height: 39px; margin-left: 4px; padding: 0 4px; border: solid #d2d2d2; border-width: 0 1px; }
.indent div { display: flex; align-items: center; gap: 3px; }
.wrap { display: grid; grid-template-rows: 17px 17px; row-gap: 5px; margin-left: 3px; flex: 1; }
.wrap button { gap: 3px; padding: 0 3px 0 2px; justify-content: flex-start; }
.wrap .dn { margin-left: auto; }
.number .tools { gap: 5px; padding-left: 2px; }
.pct { font-size: 10px; }
.comma { width: 10px; }
.styles .body { padding-left: 8px; }
.styles .big { width: 45px; }
.styles .narrow { width: 26px; }
.cells .big { width: 30px; }
.cells .body { padding-left: 5px; }
.editing .body { padding-left: 8px; }
.editing .list { width: 60px; }
.editing .big { width: 31px; }
.collapse { align-self: flex-end; margin: 0 5px 2px auto; }

.quick { flex: none; display: flex; align-items: center; height: 24px; padding-left: 6px; gap: 9px; }
.quick button { gap: 3px; }

.warning { flex: none; display: flex; align-items: center; height: 21px; padding: 0 8px 0 7px; background: #fcf7b6; border: solid #dcd8a4; border-width: 1px 0; }
.warning b { margin: 0 8px 0 7px; font-weight: 500; }
.enable { width: 81px; height: 15px; margin-left: 13px; background: #fdfdfd; border: 1px solid #ababab; }
.dismiss { margin-left: auto; }

.formula { flex: none; display: flex; align-items: flex-start; height: 46px; padding: 6px 3px 0; color: #444; font-size: 9px; }
.namebox { display: flex; align-items: center; width: 72px; height: 19px; padding: 0 4px; background: #fff; border: 1px solid #c8c8c8; }
.namebox input { flex: 1; min-width: 0; }
.namebox .dn { border-width: 3px 3px 0; }
.dots { width: 21px; line-height: 18px; text-align: center; color: #777; font-size: 10px; }
.fx { display: flex; justify-content: space-between; width: 78px; height: 19px; padding: 0 8px; background: #fff; border: 1px solid #c8c8c8; }
.fn { font: italic 700 11px/12px "Liberation Serif", serif; }
.fn small { font-size: 8px; }
.entry { display: flex; flex: 1; height: 33px; margin-left: 2px; padding: 3px 3px 0 8px; background: #fff; border: 1px solid #c8c8c8; }
.entry textarea { flex: 1; height: 26px; resize: none; }
.entry svg { margin-top: 4px; }

/* Worksheet */
.work { flex: 1; min-height: 0; display: flex; }
.sheet { flex: 1; overflow: hidden; background: #a0a0a0; }
table { width: 100%; table-layout: fixed; border-collapse: separate; border-spacing: 0; color: #111; font: 9px/10px Lato, "Noto Sans", sans-serif; }
th, td { padding: 0; white-space: nowrap; }
.w16 { width: 16px; } .w38 { width: 38px; } .w22 { width: 22px; } .w19 { width: 19px; }
.w14 { width: 14px; } .w248 { width: 248px; } .w48 { width: 48px; } .w37 { width: 37px; }
.w78 { width: 78px; } .w103 { width: 103px; } .w80 { width: 80px; } .w100 { width: 100px; } .w68 { width: 68px; }
thead th { height: 10px; background: #e6e6e6; border-right: 1px solid #b5b5b5; color: #222; font-size: 8px; font-weight: 700; line-height: 9px; }
thead .sel { background: #d2d2d2; color: #217346; border-bottom: 1px solid #217346; }
thead th:last-child { border-right: 0; }
.corner svg { margin-left: auto; }
tbody th { height: 13px; vertical-align: bottom; background: #e6e6e6; border: solid #bbb; border-width: 0 1px 1px 0; font-size: 9px; font-weight: 400; }
td { background: #fff; }
.intro td, .data td { border-right: 1px solid #ddd; border-bottom: 1px solid #ddd; }
.intro .open, .intro .over { border-right-color: #fff; }
table .first { border-left: 2px solid #1818a8; }
table tbody .last { border-right: 3px solid #1818a8; }
table tbody .thick { border-bottom: 2px solid #666; }
table tbody td.out { background: #a0a0a0; border: 0; }
.r1 { height: 36px; }
.title { position: relative; border-top: 1px solid #1818a8; color: #000; font-size: 11px; font-weight: 700; line-height: 17px; text-align: center; }
.pagebreak { position: absolute; top: 0; right: 99px; width: 2px; height: 100vh; background: repeating-linear-gradient(#1818a8 0 8px, #fff 8px 10px); }
.info td, .section td { font: 700 9px/10px Roboto, Lato, sans-serif; }
.info span { margin-left: 2px; }
.info .over span { margin-left: 14px; }
.tall { height: 19px; }
.heads td { text-align: center; border-right: 1px solid #333; border-bottom: 1px solid #333; }
.r7 { height: 14px; }
.data td { border-bottom-color: #999; }
.data td:nth-child(n+3):nth-last-child(-n+6):not(.out) { border-right-color: #333; }
.data .first { border-right-color: #333; text-align: center; }
.data tr:nth-child(3n) th { height: 12px; }
.data td:nth-child(n+4) { padding-left: 1px; }
.sub td:nth-child(5), .item td:nth-child(6) { text-align: center; }
.item td:nth-child(8), .item td:nth-child(10), .item td:nth-child(11) { padding-right: 4px; text-align: right; }
.item td:nth-child(11) { padding-right: 2px; }
.item td:nth-child(9) { text-align: center; }
.data td.out.total { padding-left: 6px; font-weight: 700; }

.vscroll { display: flex; flex-direction: column; width: 15px; padding: 1px 3px 0 2px; }
.vscroll button { height: 11px; background: #fff; border: 1px solid #b5b5b5; }
.thumb { height: 38px; background: #fff; border: 1px solid #b5b5b5; }
.vscroll button:last-child { margin-top: auto; }

.sheets { flex: none; display: flex; align-items: center; height: 19px; border-top: 1px solid #b5b5b5; font-size: 9px; color: #555; }
.arrow { width: 20px; }
.arrow:first-child { margin-left: 11px; }
.arrow .side { border-top-width: 2px; border-bottom-width: 2px; border-left-color: #217346; border-right-color: #217346; }
.more { width: 20px; color: #217346; font-weight: 700; }
.strip { display: flex; gap: 3px; height: 16px; }
.strip button { flex: none; border-left: 1px solid #999; }
.strip .gold { background: #ffc000; color: #222; }
.strip .green { background: #92d050; color: #222; }
.strip .orange { background: #ed7d31; color: #222; }
.strip .yellow { background: #ff0; color: #222; }
.strip .current { background: linear-gradient(#fff, #fff0bd); border-bottom: 1px solid #217346; color: #217346; font-weight: 700; }
.s1 { width: 50px; } .s2 { width: 53px; } .s3 { width: 46px; } .s4 { width: 55px; } .s5 { width: 57px; }
.s6 { width: 63px; } .s7 { width: 60px; } .s8 { width: 49px; } .s9 { width: 30px; } .s10 { width: 49px; }
.add { margin-left: 2px; }
.sheets .dots { width: 24px; margin-left: auto; }
.hscroll { display: flex; width: 42px; height: 11px; margin-right: 15px; background: #d6d6d6; }
.hscroll button { width: 10px; background: #fff; border: 1px solid #b5b5b5; }
.hscroll .side { border-width: 2px 0 2px 3px; }
.hscroll .side.left { border-width: 2px 3px 2px 0; }
.hscroll span { width: 14px; background: #fff; border: 1px solid #b5b5b5; }
.hscroll button:last-child { margin-left: auto; }

.status { flex: none; display: flex; justify-content: flex-end; align-items: center; height: 16px; padding-right: 9px; background: #f3f3f3; border-top: 1px solid #d6d6d6; }
.status button { width: 28px; height: 15px; }
.status .z { width: 14px; font-size: 11px; }
.status input { width: 70px; height: 12px; appearance: none; }
.status input::-webkit-slider-runnable-track { height: 8px; background: linear-gradient(#999, #999) center / 100% 1px no-repeat; }
.status input::-webkit-slider-thumb { appearance: none; width: 3px; height: 8px; background: #666; }
.pc { width: 21px; text-align: right; }

.taskbar { flex: none; display: flex; align-items: center; height: 28px; padding-right: 9px; background: linear-gradient(#686868, #5c5c5c); color: #fff; }
.taskbar > button { width: 41px; height: 27px; margin-right: 3px; border: 1px solid transparent; }
.taskbar > button:nth-child(odd) { margin-right: 2px; }
.taskbar > button:first-child { width: 35px; }
.taskbar > .open { background: #7c7c7c; border-color: #929292; }
.taskbar > .focus { background: #a3a3a3; border-color: #bbb; }
.tray { display: flex; align-items: center; height: 100%; margin-left: auto; text-align: center; }
.tray button { width: 17px; }
.tray .alert { width: 43px; height: 27px; border: 1px solid #888; border-radius: 6px 0 0 0; background: linear-gradient(135deg, #888, #5c5c5c); }
.lang { width: 30px; margin-left: 1px; }
time { width: 50px; }
```
